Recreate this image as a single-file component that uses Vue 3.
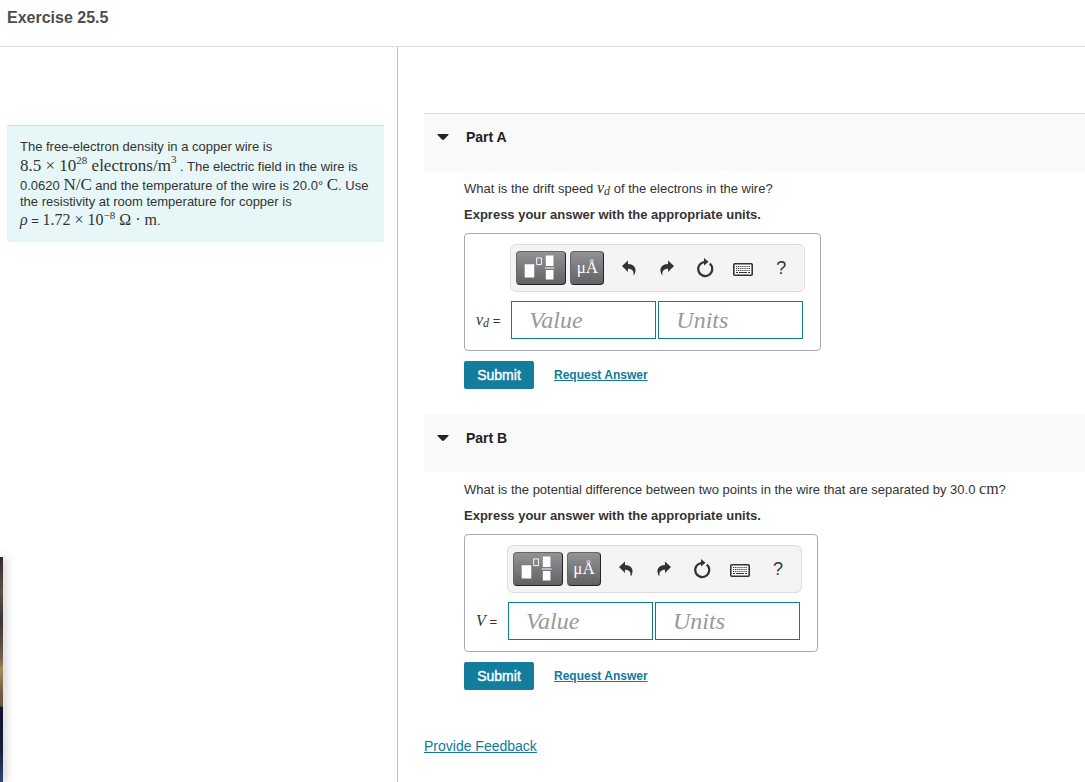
<script setup>
import { reactive } from 'vue'

const parts = reactive([
  { id: 'a', title: 'Part A', symbol: 'v', sub: 'd', value: '', units: '' },
  { id: 'b', title: 'Part B', symbol: 'V', sub: '', value: '', units: '' },
])
</script>

<template>
  <div class="page">
    <header class="top"><h1>Exercise 25.5</h1></header>
    <div class="columns">
      <aside class="left">
        <div class="problem">
          <div class="line">The free-electron density in a copper wire is</div>
          <div class="line tall"><span class="math large">8.5 × 10<sup>28</sup> electrons/m<sup class="raised">3</sup></span> . The electric field in the wire is</div>
          <div class="line"><span>0.0620 </span><span class="math large">N/C</span> and the temperature of the wire is 20.0° <span class="math large">C</span>. Use</div>
          <div class="line">the resistivity at room temperature for copper is</div>
          <div class="line last"><span class="math"><i>ρ</i></span> = <span class="math">1.72 × 10<sup>−8</sup> Ω · m</span>.</div>
        </div>
      </aside>
      <main class="right">
        <section v-for="p in parts" :key="p.id" class="part">
          <h2 class="part-head">
            <button type="button" class="toggle">
              <svg width="12" height="6" viewBox="0 0 12 6" aria-hidden="true"><path d="M1 0h10q1 .3.4 1L7 5.5q-1 .8-2 0L.6 1Q0 .3 1 0z" fill="#222" /></svg>
              <span>{{ p.title }}</span>
            </button>
          </h2>
          <div class="part-body">
            <p v-if="p.id === 'a'" class="ask">What is the drift speed <i class="math">v<sub>d</sub></i> of the electrons in the wire?</p>
            <p v-else class="ask">What is the potential difference between two points in the wire that are separated by 30.0 <span class="math">cm</span>?</p>
            <p class="express">Express your answer with the appropriate units.</p>
            <div class="answer">
              <label class="symbol" :for="'value-' + p.id"><i class="math">{{ p.symbol }}<sub v-if="p.sub">{{ p.sub }}</sub></i> =</label>
              <div class="toolbar">
                <button type="button" class="dark wide" aria-label="Templates">
                  <svg width="50" height="34" viewBox="0 0 50 34">
                    <path d="M8 13h10v14H8zM30 4h8v11h-8zM30 19h8v10h-8zM29 16.5h10v1H29z" fill="#fff" />
                    <path d="M20.500 6.500h5v7h-5z" fill="none" stroke="#fff" />
                  </svg>
                </button>
                <button type="button" class="dark units-key">μÅ</button>
                <div class="tools">
                  <button type="button" class="tool" aria-label="Undo">
                    <svg width="14" height="16" viewBox="0 0 14 16"><path d="M0 6L6 .5V4C11 4 14 7 13.500 11Q13.200 14 11.500 15.500C12.300 11 10 8.800 6 8.800V12z" fill="#333" /></svg>
                  </button>
                  <button type="button" class="tool" aria-label="Redo">
                    <svg width="14" height="16" viewBox="0 0 14 16"><path d="M14 6L8 .5V4C3 4 0 7 .5 11Q.8 14 2.500 15.500C1.700 11 4 8.800 8 8.800V12z" fill="#333" /></svg>
                  </button>
                  <button type="button" class="tool" aria-label="Reset">
                    <svg width="18" height="20" viewBox="0 0 18 20"><path d="M13.800 5.700A7 7 0 1 1 9 4" fill="none" stroke="#333" stroke-width="2.200" /><path d="M8 0L12.500 3.800L8 7.500z" fill="#333" /></svg>
                  </button>
                  <button type="button" class="tool" aria-label="Keyboard">
                    <svg class="keys" width="20" height="13" viewBox="0 0 20 13"><rect x=".8" y=".8" width="18.400" height="11.400" rx="1" fill="#fff" stroke="#333" stroke-width="1.600" /><path d="M3 3.500h14M3 5.500h14M3 7.500h14" stroke="#333" stroke-width="1.200" stroke-dasharray="1.200 .9" /><path d="M3 9.500h2M6 9.500h8M15 9.500h2" stroke="#333" stroke-width="1.200" /></svg>
                  </button>
                  <button type="button" class="tool help" aria-label="Help">?</button>
                </div>
              </div>
              <div class="fields">
                <input :id="'value-' + p.id" v-model="p.value" type="text" placeholder="Value" />
                <input v-model="p.units" type="text" placeholder="Units" aria-label="Units" />
              </div>
            </div>
            <div class="actions">
              <button type="button" class="submit">Submit</button>
              <a href="#" class="request">Request Answer</a>
            </div>
          </div>
        </section>
        <a href="#" class="feedback">Provide Feedback</a>
      </main>
    </div>
    <div class="thumb"></div>
  </div>
</template>

<style>
body { margin: 0; background: #fff; }
</style>

<style scoped>
* { box-sizing: border-box; }
.page {
  min-height: 100vh;
  display: flex;
  flex-direction: column;
  font: 13px/17px "Liberation Sans", Arial, sans-serif;
  color: #333;
  position: relative;
  overflow: hidden;
}
.top { height: 47px; padding: 8px 7px; border-bottom: 1px solid #ddd; }
h1 { margin: 0; font-size: 16px; line-height: 20px; color: #4d4d4d; }
.columns { flex: 1; display: grid; grid-template-columns: 398px 1fr; }
.left { border-right: 1px solid #bcc5cd; padding: 78px 13px 0 7px; }
.problem { background: #e7f7f7; border-top: 1px solid #d9dfdf; padding: 12px 0 12px 13px; }
.line { height: 17px; line-height: 17px; white-space: nowrap; }
.line.tall { height: 21px; line-height: 23px; }
.line.last { height: 20px; line-height: 22px; }
.math { font-family: "Liberation Serif", "Times New Roman", serif; font-size: 16px; line-height: 1; }
.math.large { font-size: 17px; }
sup, sub { font-size: 11px; line-height: 0; }
sub { font-size: 12px; vertical-align: -2px; }
sup.raised { vertical-align: 8px; }
.right { padding: 66px 0 20px 26px; min-width: 0; }
.part { margin-bottom: 26px; }
.part-head { margin: 0; height: 57px; background: #f9f9f9; }
.part:first-child .part-head { height: 58px; border-top: 1px solid #ddd; }
.toggle {
  display: flex; align-items: center; gap: 17px; padding: 13px; border: 0; background: none;
  font: bold 14px/20px "Liberation Sans", Arial, sans-serif; color: #222;
}
.part-body { padding: 9px 0 0 40px; }
p { margin: 0; }
.ask { height: 18px; line-height: 18px; }
.express { margin-top: 8px; font-weight: bold; line-height: 17px; }
.answer {
  width: fit-content; margin-top: 10px; padding: 10px 15px 11px 11px;
  border: 1px solid #aaa; border-radius: 4px;
  display: grid; grid-template-columns: auto auto; row-gap: 9px; column-gap: 10px;
}
.symbol { grid-column: 1; grid-row: 2; align-self: center; white-space: nowrap; }
.toolbar {
  grid-column: 2; grid-row: 1; width: 295px; height: 48px; padding: 0 5px;
  display: flex; align-items: center; gap: 4px;
  background: #f4f4f4; border: 1px solid #ddd; border-radius: 6px;
}
.tools { display: flex; gap: 4px; padding-left: 4px; }
.dark {
  height: 34px; padding: 0; border: 1px solid #333; border-color: #666 #222 #222 #666; border-radius: 4px; color: #fff;
  background: linear-gradient(#929297, #626264);
  display: flex; align-items: center; justify-content: center;
}
.wide { width: 50px; }
.units-key { width: 34px; font: 17px/32px "Liberation Serif", serif; }
.tool { width: 34px; height: 34px; padding: 0; border: 0; background: none; display: flex; align-items: center; justify-content: center; }
.keys { margin-top: 3px; }
.help { font: 18px/20px "Liberation Sans", Arial, sans-serif; color: #333; }
.fields { grid-column: 2; grid-row: 2; display: flex; gap: 2px; padding-left: 1px; }
.fields input {
  width: 145px; height: 38px; padding: 0 17px; border: 1px solid #117a9b; border-radius: 0; background: #fff;
  font: italic 24px/34px "Liberation Serif", serif; color: #333; outline: 0;
}
.fields input::placeholder { color: #999; opacity: 1; }
.actions { margin-top: 10px; display: flex; align-items: center; gap: 20px; }
.submit {
  width: 70px; height: 28px; padding: 0; border: 0; border-radius: 2px; background: #147c9c; color: #fff;
  font: 14px/28px "Liberation Sans", Arial, sans-serif; -webkit-text-stroke: 0.4px #fff;
}
.request { color: #117a9b; font-weight: bold; font-size: 12px; }
.feedback { display: inline-block; margin-top: 21px; font-size: 14px; line-height: 18px; color: #117a9b; }
.thumb {
  position: absolute; left: 0; bottom: 0; width: 3px; height: 225px;
  background: linear-gradient(#302a2a, #5c5048 15%, #3c3633 28%, #4e433f 35%, #765f4b 45%, #a58b60 50%, #715d40 60%, #675641 66%, #10132d 67%, #171c3b 85%, #304770);
  box-shadow: 1px 0 10px rgba(0, 0, 0, 0.45);
}
</style>
